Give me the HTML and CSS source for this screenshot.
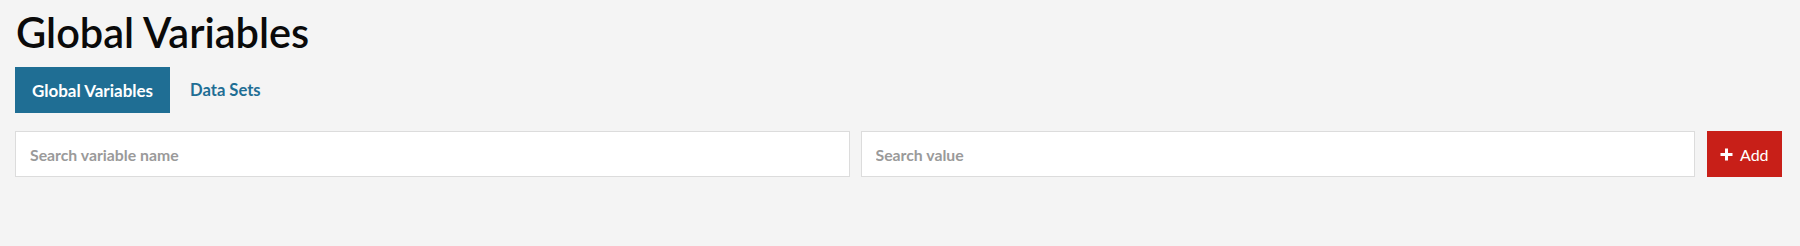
FILE: index.html
```html
<!DOCTYPE html>
<html>
<head>
<meta charset="utf-8">
<link rel="stylesheet" href="styles.css">
</head>
<body>
<div class="page">
  <h1 class="title">Global Variables</h1>
  <div class="tabs">
    <a class="tab active">Global Variables</a>
    <a class="tab">Data Sets</a>
  </div>
  <div class="filters">
    <input class="search" type="text" placeholder="Search variable name">
    <input class="search" type="text" placeholder="Search value">
    <button class="add-btn"><svg class="plus" width="13" height="13" viewBox="0 0 13 13"><path d="M6.5 0.5v12M0.5 6.5h12" stroke="#fff" stroke-width="3"/></svg><span>Add</span></button>
  </div>
</div>
</body>
</html>
```
FILE: styles.css
```css
html, body {
  margin: 0;
  padding: 0;
  background: #f4f4f4;
  font-family: Lato, "Open Sans", sans-serif;
}
.page {
  padding: 8px 18px 0 15px;
}
.title {
  margin: 0 0 0 1px;
  font-size: 41.5px;
  font-weight: 600;
  line-height: 48px;
  color: #0a0a0a;
}
.tabs {
  display: flex;
  margin-top: 11px;
  height: 46px;
}
.tab {
  display: flex;
  align-items: center;
  font-size: 17px;
  font-weight: 700;
  color: #1f6e94;
  cursor: pointer;
}
.tab.active {
  box-sizing: border-box;
  width: 155px;
  justify-content: center;
  background: #1f6e94;
  color: #fff;
}
.tab + .tab {
  padding-left: 20px;
  font-size: 16.6px;
}
.filters {
  display: flex;
  margin-top: 18px;
  height: 46px;
}
.search {
  flex: 1;
  box-sizing: border-box;
  height: 46px;
  margin: 0 11px 0 0;
  border: 1px solid #dcdcdc;
  background: #fff;
  padding: 0 14px;
  font-family: Lato, sans-serif;
  font-size: 15.8px;
  font-weight: 700;
  color: #333;
  outline: none;
}
.search:nth-child(2) {
  margin-right: 12px;
}
.search::placeholder {
  color: #9a9a9a;
}
.add-btn {
  display: flex;
  align-items: center;
  gap: 7px;
  width: 75px;
  height: 46px;
  box-sizing: border-box;
  padding: 0 0 0 13px;
  border: none;
  background: #c81f18;
  color: #fff;
  font-family: Lato, sans-serif;
  font-size: 16px;
  font-weight: 400;
  cursor: pointer;
}
.plus {
  display: block;
}
```
